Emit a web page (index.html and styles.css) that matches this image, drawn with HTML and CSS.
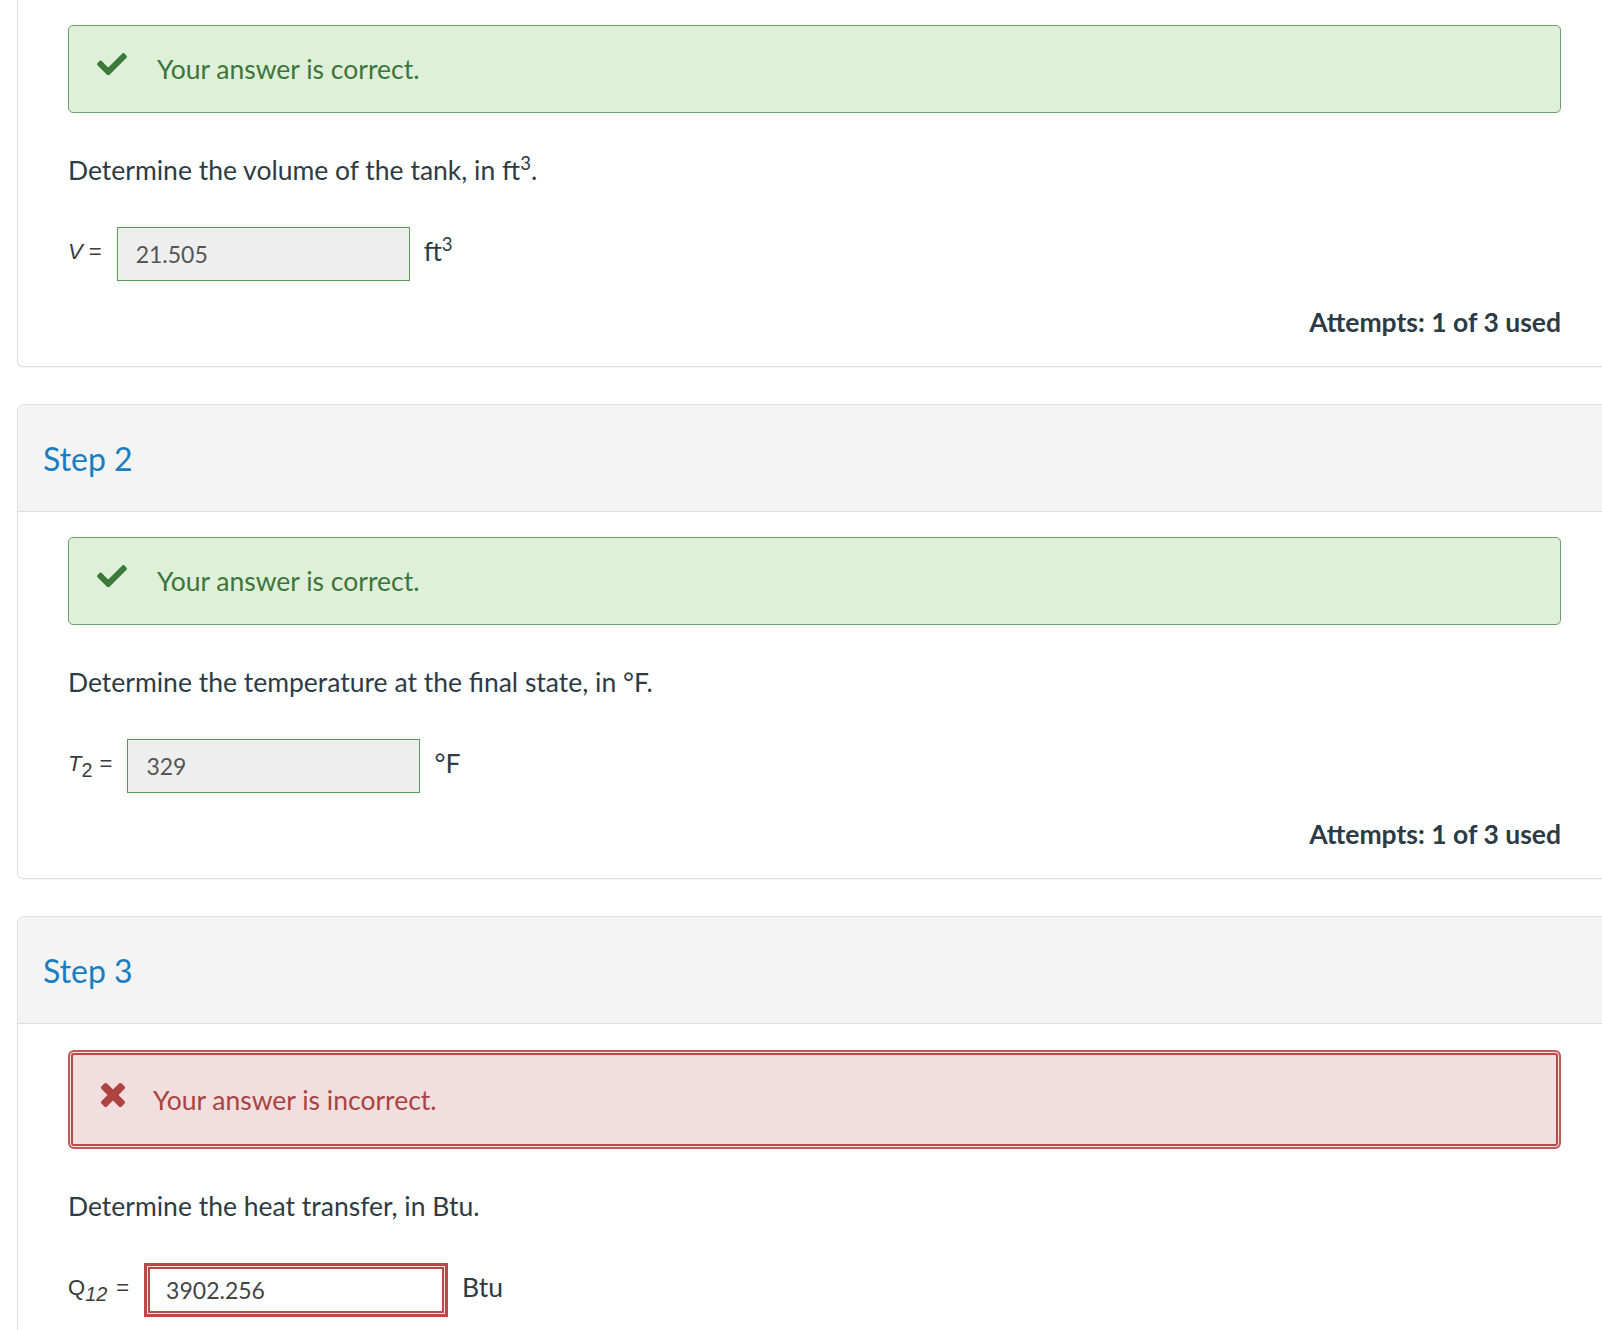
FILE: index.html
```html
<!DOCTYPE html>
<html lang="en">
<head>
<meta charset="utf-8">
<title>Steps</title>
<link rel="stylesheet" href="styles.css">
</head>
<body>
<div class="page">

  <section class="card card--continued">
    <div class="card-body">
      <div class="feedback feedback--correct">
        <svg class="icon-check" viewBox="0 64 512 384" aria-hidden="true"><path d="M173.898 439.404l-166.4-166.4c-9.997-9.997-9.997-26.206 0-36.204l36.203-36.204c9.997-9.998 26.207-9.998 36.204 0L192 312.69 432.095 72.596c9.997-9.997 26.207-9.997 36.204 0l36.203 36.204c9.997 9.997 9.997 26.206 0 36.204l-294.4 294.401c-9.998 9.997-26.207 9.997-36.204-.001z"/></svg>
        <span class="feedback-text">Your answer is correct.</span>
      </div>
      <p class="question">Determine the volume of the tank, in ft<sup>3</sup>.</p>
      <div class="answer-row">
        <span class="math-label"><i>V</i> =</span>
        <input class="answer answer--correct" type="text" value="21.505" readonly>
        <span class="unit">ft<sup>3</sup></span>
      </div>
      <div class="attempts">Attempts: 1 of 3 used</div>
    </div>
  </section>

  <section class="card">
    <header class="card-header"><h2 class="step-title">Step 2</h2></header>
    <div class="card-body">
      <div class="feedback feedback--correct">
        <svg class="icon-check" viewBox="0 64 512 384" aria-hidden="true"><path d="M173.898 439.404l-166.4-166.4c-9.997-9.997-9.997-26.206 0-36.204l36.203-36.204c9.997-9.998 26.207-9.998 36.204 0L192 312.69 432.095 72.596c9.997-9.997 26.207-9.997 36.204 0l36.203 36.204c9.997 9.997 9.997 26.206 0 36.204l-294.4 294.401c-9.998 9.997-26.207 9.997-36.204-.001z"/></svg>
        <span class="feedback-text">Your answer is correct.</span>
      </div>
      <p class="question">Determine the temperature at the final state, in °F.</p>
      <div class="answer-row">
        <span class="math-label"><i>T</i><sub>2</sub> =</span>
        <input class="answer answer--correct" type="text" value="329" readonly>
        <span class="unit">°F</span>
      </div>
      <div class="attempts">Attempts: 1 of 3 used</div>
    </div>
  </section>

  <section class="card">
    <header class="card-header"><h2 class="step-title">Step 3</h2></header>
    <div class="card-body">
      <div class="feedback feedback--incorrect">
        <svg class="icon-times" viewBox="110 366 1188 1188" aria-hidden="true"><path d="M1298 1322q0 40-28 68l-136 136q-28 28-68 28t-68-28l-294-294-294 294q-28 28-68 28t-68-28l-136-136q-28-28-28-68t28-68l294-294-294-294q-28-28-28-68t28-68l136-136q28-28 68-28t68 28l294 294 294-294q28-28 68-28t68 28l136 136q28 28 28 68t-28 68l-294 294 294 294q28 28 28 68z"/></svg>
        <span class="feedback-text">Your answer is incorrect.</span>
      </div>
      <p class="question">Determine the heat transfer, in Btu.</p>
      <div class="answer-row">
        <span class="math-label">Q<sub class="sub-italic">12</sub> =</span>
        <input class="answer answer--incorrect" type="text" value="3902.256" readonly>
        <span class="unit">Btu</span>
      </div>
    </div>
  </section>

</div>
</body>
</html>
```

FILE: styles.css
```css
html, body {
  margin: 0;
  padding: 0;
  overflow: hidden;
  background: #ffffff;
}

body {
  font-family: Lato, "Open Sans", "Liberation Sans", sans-serif;
  color: #2d3b45;
}

.page {
  margin-left: 17px;
  width: 1595px;
}

.card {
  border: 1px solid #e0e0e0;
  border-radius: 6px;
  background: #ffffff;
  box-shadow: 0 1px 1px rgba(0, 0, 0, 0.04);
  margin-bottom: 37px;
}

.card--continued {
  border-top: none;
  border-top-left-radius: 0;
  border-top-right-radius: 0;
}

.card-header {
  height: 106px;
  background: #f4f4f4;
  border-bottom: 1px solid #dedede;
  border-radius: 6px 6px 0 0;
  display: flex;
  align-items: center;
  padding-left: 25px;
}

.step-title {
  margin: 0;
  font-weight: 400;
  font-size: 32px;
  color: #1a7dbf;
}

.card-body {
  padding: 25px 50px 26px 50px;
}

.feedback {
  box-sizing: border-box;
  display: flex;
  align-items: center;
  font-size: 26.5px;
}

.feedback--correct {
  height: 88px;
  background: #dff0d8;
  border: 1px solid #6f9f6c;
  border-radius: 5px;
  color: #3c763d;
  padding-left: 28px;
}

.feedback--incorrect {
  height: 99px;
  margin-top: 1px;
  background: #f2dede;
  border: 2px solid #c05b59;
  border-radius: 6px;
  box-shadow: inset 0 0 0 1px #f5e3e3, inset 0 0 0 3px #b94a48;
  color: #a94442;
  padding-left: 31px;
}

.icon-check {
  width: 30px;
  height: 22.5px;
  fill: #3b7a3b;
  margin-bottom: 10px;
  margin-right: 30px;
  flex: none;
}

.icon-times {
  width: 24px;
  height: 24px;
  fill: #ad4442;
  margin-bottom: 10px;
  margin-right: 28px;
  flex: none;
}

.question {
  font-size: 26.5px;
  line-height: 36px;
  margin: 39px 0 0 0;
}

sup {
  font-size: 0.7em;
  line-height: 0;
  vertical-align: 0.55em;
}

.answer-row {
  display: flex;
  align-items: center;
  margin-top: 39px;
  height: 54px;
}

.math-label {
  font-family: "Liberation Sans", Arial, sans-serif;
  font-size: 22px;
  color: #3a3a3a;
  margin-right: 15px;
  margin-bottom: 4px;
  white-space: nowrap;
}

.math-label sub {
  font-size: 0.9em;
  line-height: 0;
  vertical-align: -0.3em;
  margin-right: 1px;
}

.math-label .sub-italic {
  font-style: italic;
  margin-right: 3px;
}

.answer {
  box-sizing: border-box;
  width: 293px;
  height: 54px;
  margin: 0;
  padding: 0 0 0 18px;
  font-family: Lato, "Open Sans", sans-serif;
  font-size: 23px;
  color: #555555;
  background: #eeeeee;
  outline: none;
}

.answer--correct {
  border: 1px solid #5d9a5a;
}

.answer--incorrect {
  width: 304px;
  height: 54px;
  padding-left: 19px;
  background: #ffffff;
  border: 3px solid #b94a48;
  box-shadow: inset 0 0 0 1px #f4e0e0, inset 0 0 0 3px #b94a48;
  color: #444;
}

.unit {
  font-size: 26.5px;
  margin-left: 14px;
  margin-bottom: 6px;
  color: #2d3b45;
}

.attempts {
  text-align: right;
  font-weight: 700;
  font-size: 26.5px;
  line-height: 36px;
  margin-top: 23px;
  color: #2d3b45;
}
```
